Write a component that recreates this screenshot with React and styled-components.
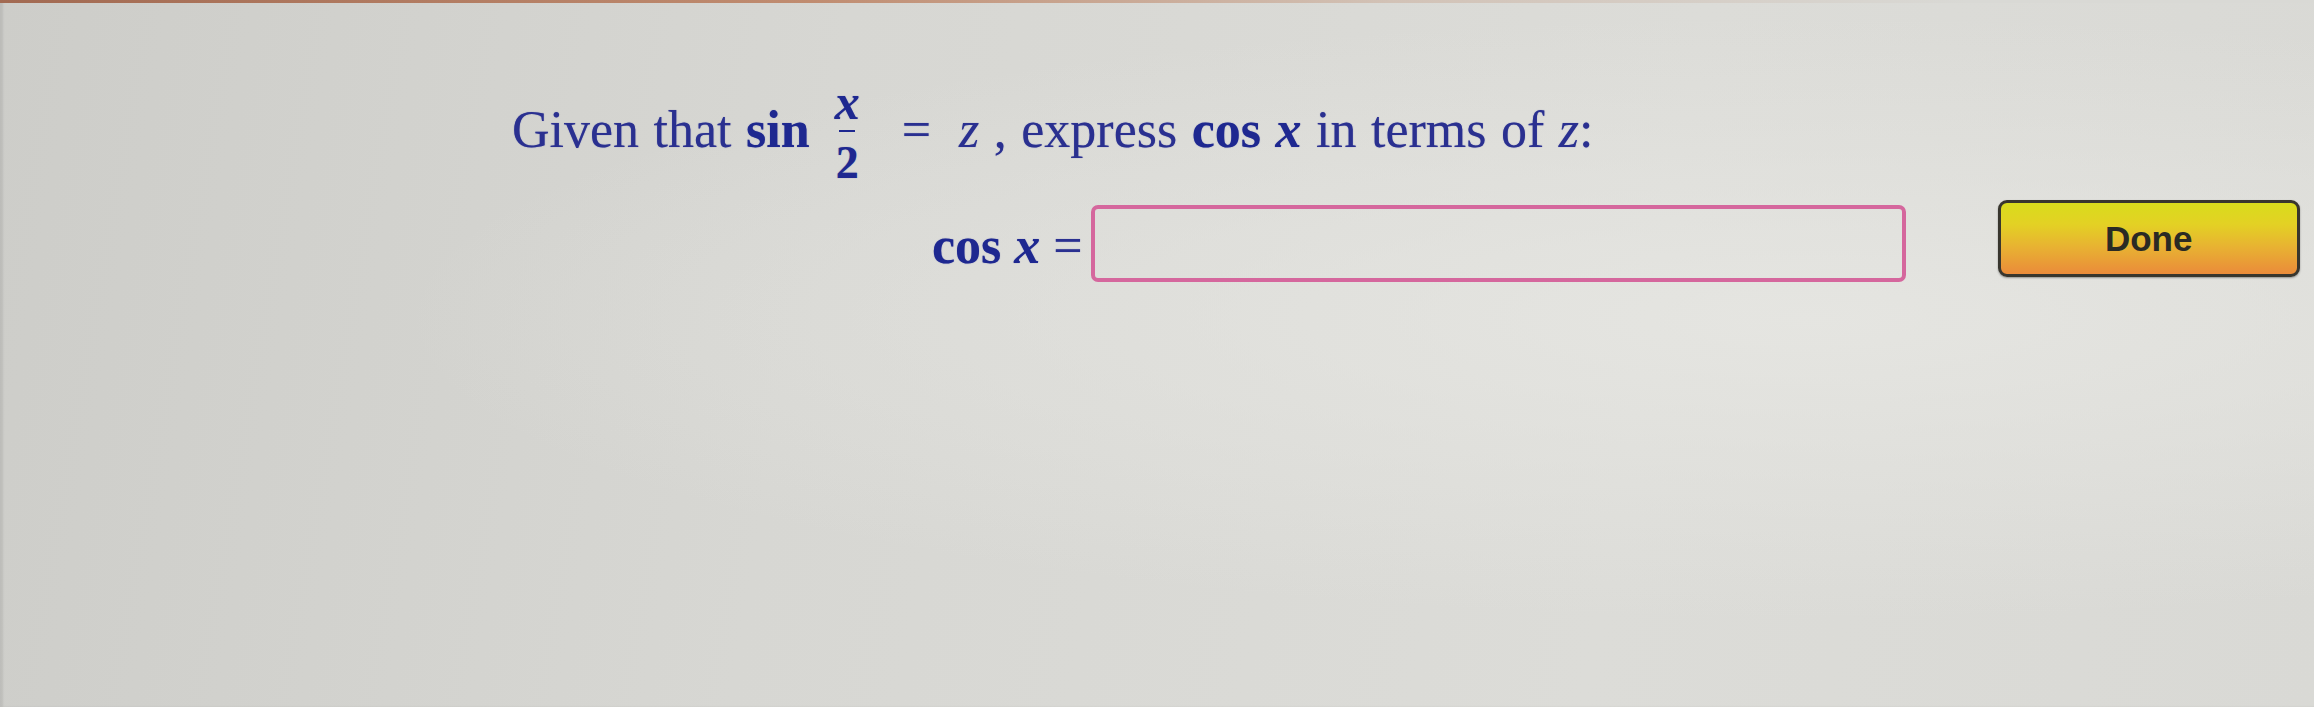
import React from "react"
import styled, { createGlobalStyle } from "styled-components"

const GlobalStyle = createGlobalStyle`
  html, body {
    margin: 0;
    padding: 0;
    background: #d9d9d5;
  }
  * {
    box-sizing: border-box;
  }
`

const App = () => {
  return (
    <>
      <GlobalStyle />
      <Page>
        <TopEdge />
        <Question>
          Given that <Strong>sin</Strong>
          <Frac>
            <Num>x</Num>
            <Bar />
            <Den>2</Den>
          </Frac>
          <Op>=</Op>
          <Var>z</Var> , express <Strong>cos</Strong> <StrongVar>x</StrongVar> in terms of <Var>z</Var>:
        </Question>
        <AnswerRow>
          <Label>
            <Strong>cos</Strong> <StrongVar>x</StrongVar> =
          </Label>
          <AnswerBox type="text" aria-label="cos x" />
          <DoneButton>Done</DoneButton>
        </AnswerRow>
      </Page>
    </>
  )
}

const Page = styled.div`
  width: 2314px;
  height: 707px;
  overflow: hidden;
  display: flex;
  flex-direction: column;
  background:
    radial-gradient(ellipse at 78% 45%, rgba(230, 230, 226, 0.9) 0%, rgba(230, 230, 226, 0) 55%),
    linear-gradient(100deg, #cdcdc9 0%, #d7d7d3 35%, #dcdcd8 70%, #d9d9d5 100%);
  box-shadow: inset 3px 0 2px rgba(0, 0, 0, 0.08);
  font-family: "Liberation Serif", "Times New Roman", serif;
  color: #2a3090;
  text-shadow: 0 0 1px rgba(40, 48, 150, 0.55);
`

const TopEdge = styled.div`
  height: 3px;
  flex: none;
  background: linear-gradient(90deg, #a26a52 0%, #c08c70 35%, #d2c2b6 60%, #d9d9d5 85%);
`

const Question = styled.p`
  margin: 74px 0 0 512px;
  font-size: 52px;
  line-height: 60px;
  white-space: nowrap;
  word-spacing: 1.5px;
`

const Strong = styled.b`
  font-weight: 700;
  color: #1e2890;
`

const StrongVar = styled.b`
  font-weight: 700;
  font-style: italic;
  color: #1e2890;
`

const Var = styled.i`
  font-style: italic;
`

const Op = styled.span`
  margin-right: 28px;
`

const Frac = styled.span`
  display: inline-flex;
  flex-direction: column;
  align-items: center;
  vertical-align: 28px;
  margin: 0 42px 0 25px;
  color: #1e2890;
  font-weight: 700;
`

const Num = styled.span`
  font-size: 50px;
  line-height: 1;
  font-style: italic;
`

const Bar = styled.span`
  width: 16px;
  height: 2px;
  margin: 3px 0 8px;
  background: #1e2890;
`

const Den = styled.span`
  font-size: 46px;
  line-height: 1;
`

const AnswerRow = styled.div`
  display: flex;
  align-items: center;
  margin: 14px 0 0 932px;
  height: 82px;
`

const Label = styled.span`
  font-size: 52px;
  line-height: 60px;
  margin-top: 10px;
  margin-right: 8px;
  white-space: nowrap;
`

const AnswerBox = styled.input`
  width: 815px;
  height: 77px;
  margin-top: 5px;
  border: 4px solid #d5679d;
  border-radius: 7px;
  background: transparent;
  outline: none;
`

const DoneButton = styled.button`
  width: 302px;
  height: 77px;
  margin-left: 92px;
  margin-bottom: 5px;
  border: 3px solid #38362e;
  border-radius: 9px;
  background: linear-gradient(180deg, #d9dc1c 0%, #e3d124 30%, #e8b232 62%, #ea8b3a 100%);
  box-shadow: 0 1px 2px rgba(0, 0, 0, 0.35);
  font-family: "Liberation Sans", Arial, sans-serif;
  font-weight: 700;
  font-size: 35px;
  color: #2a2a24;
  text-shadow: none;
  padding: 0;
  cursor: pointer;
`

export default App
